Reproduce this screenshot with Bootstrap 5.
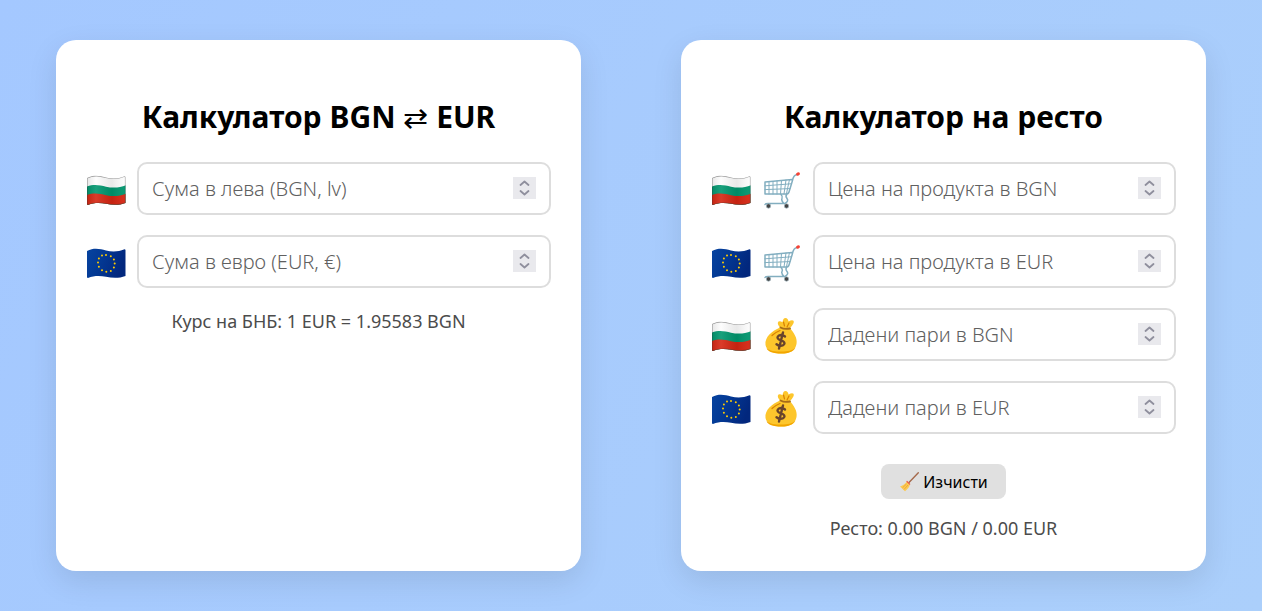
<!DOCTYPE html>
<html lang="bg">
<head>
<meta charset="utf-8">
<meta name="viewport" content="width=device-width, initial-scale=1">
<title>Калкулатор BGN ⇄ EUR</title>
<link href="https://cdn.jsdelivr.net/npm/bootstrap@5.3.0/dist/css/bootstrap.min.css" rel="stylesheet">
<style>
  body { font-family: "Noto Sans", "Open Sans", sans-serif; color: #000; background: linear-gradient(120deg, #a4c8ff, #abcffb); }
  .page-wrap { max-width: 1190px; padding: 40px 20px; }
  .panels { gap: 40px 100px; }
  .panel { background: #fff; border-radius: 20px; padding: 60px 30px 30px; box-shadow: 0 10px 30px rgba(0, 0, 0, .1); flex: 1 1 400px; min-width: 0; }
  .panel h1 { font-size: 30px; line-height: 34px; margin-bottom: 28px; }
  .field-row { gap: 11px; margin-bottom: 20px; }
  .icons { gap: 11px; }
  .icons svg { width: 40px; height: 40px; }
  .amount { height: 53px; border: 2px solid #ddd; border-radius: 10px; padding: 0 48px 0 13px; font-size: 20px; color: #222; appearance: textfield;
    background: #fff url("data:image/svg+xml,%3Csvg xmlns='http://www.w3.org/2000/svg' width='23' height='22'%3E%3Cpath fill='%23e9e9ed' d='M0 0h23v22H0z'/%3E%3Cpath d='M7.5 8l4-3.500 4 3.500M7.500 14l4 3.500 4-3.500' fill='none' stroke='%238f8f9d' stroke-width='1.800' stroke-linecap='round' stroke-linejoin='round'/%3E%3C/svg%3E") no-repeat right 13px top 13px; }
  .amount::-webkit-inner-spin-button { appearance: none; margin: 0; }
  .amount::placeholder { color: #606060; font-weight: 300; }
  .note { font-size: 18px; line-height: 26px; color: #4c4c4c; }
  .clear-btn { background: #e0e0e0; border: 0; border-radius: 8px; height: 35px; margin: 10px 0 16px; padding: 0 18px; font-size: 16px; line-height: 24px; gap: 4px; color: #000; }
  .clear-btn svg { width: 20px; height: 20px; }
</style>
</head>
<body>
<svg class="position-absolute" width="0" height="0" aria-hidden="true">
  <defs>
    <linearGradient id="euBlue" x1="0" x2="1" y1="0" y2=".4"><stop stop-color="#0745a2"/><stop offset=".5" stop-color="#033893"/><stop offset="1" stop-color="#02277d"/></linearGradient>
    <linearGradient id="sheen" x1="0" x2="1"><stop stop-color="#000" stop-opacity=".1"/><stop offset=".25" stop-color="#fff" stop-opacity=".1"/><stop offset=".65" stop-color="#000" stop-opacity=".08"/><stop offset="1" stop-color="#fff" stop-opacity=".05"/></linearGradient>
    <clipPath id="wave"><path d="M1 9C8 5.500 14 7 20 8.500s12 1.500 18.500-1.200q1 0 1 1V34C33 36.500 26 36 20 34.800S8 33.500 2 36q-1 0-1-1z"/></clipPath>
  </defs>
  <symbol id="bg" viewBox="0 0 40 40">
    <g clip-path="url(#wave)">
      <path fill="#fdfdfd" d="M0 0h40v40H0z"/>
      <path fill="#00966e" d="M0 18c8-3.500 14-1.500 20-.3s13 1.500 20-1.400V40H0z"/>
      <path fill="#d62612" d="M0 26.500c8-3.500 14-1.500 20-.3s13 1.500 20-1.400V40H0z"/>
      <path fill="url(#sheen)" d="M0 0h40v40H0z"/>
      <path d="M1 9C8 5.500 14 7 20 8.500s12 1.500 18.500-1.200q1 0 1 1V34C33 36.500 26 36 20 34.800S8 33.500 2 36q-1 0-1-1z" fill="none" stroke="#333" stroke-opacity=".45" stroke-width="1.200"/>
    </g>
  </symbol>
  <symbol id="eu" viewBox="0 0 40 40">
    <g clip-path="url(#wave)"><path fill="url(#euBlue)" d="M0 0h40v40H0z"/></g>
    <g fill="#fc0">
      <circle cx="20" cy="13" r="1"/><circle cx="24.800" cy="14.300" r="1"/><circle cx="27.900" cy="17.600" r="1"/><circle cx="28.700" cy="21.500" r="1"/><circle cx="27.900" cy="25.500" r="1"/><circle cx="24.800" cy="29" r="1"/><circle cx="20.300" cy="29.800" r="1"/><circle cx="16" cy="28.200" r="1"/><circle cx="12.900" cy="24.800" r="1"/><circle cx="12" cy="20.500" r="1"/><circle cx="12.900" cy="16.500" r="1"/><circle cx="16" cy="13.600" r="1"/>
    </g>
  </symbol>
  <symbol id="cart" viewBox="0 -1 40 40">
    <g fill="none" stroke="#82aec0" stroke-linecap="round" stroke-linejoin="round">
      <path stroke-width="1.500" d="M35 4.500c-3 .5-4 3-4.500 6L27 22q-.5 2-3 2L3 24 3 12 30 9.500M19 24.500q2 2 1 4t2 5M25 24q-2 2 0 4.500t-2 5L6 33.500q-2.500 0-3 1"/>
      <path stroke-width="1" d="M3 15.800l26-2M3 19.600l25-1M7 12v12M11 11.500V24M15 11v13M19.500 10.500L18.500 24M24 10l-2 14M27.500 9.500l-3 14"/>
    </g>
    <g fill="#444" stroke="#9fb5bd" stroke-width=".7"><circle cx="6.500" cy="36" r="2.200"/><circle cx="24.500" cy="36" r="2.200"/></g>
    <ellipse cx="36" cy="4" rx="2" ry="1.600" fill="#f44336" transform="rotate(-20 36 4)"/>
  </symbol>
  <symbol id="money" viewBox="0 -1 40 40">
    <path fill="#fdc62c" d="M18 11.500c-2-2.500-3-4.500-1.500-6q2-.5 4 .8Q21 2 23.500 2t3 3.500q3.500-2 5-.8 1.500 2-3.500 7.300c4 5 7.500 10 6.500 16-1.500 7-7 9.500-15 9.500S4.500 35 3.500 29c-1-8 6.500-14 14.500-17.500z"/>
    <path fill="#f2a600" d="M4.500 32c1.500 4 6.500 5.500 15 5.500 7 0 12-2 14-6-3 3-7.500 4-14 4S8 35 4.500 32z"/>
    <path fill="none" stroke="#d98200" stroke-width="1.200" stroke-linecap="round" d="M21.500 6l1 4M27 7l-2 4M18 14.500q-5 2-8 5"/>
    <path fill="none" stroke="#a66c1a" stroke-width="1.800" stroke-linecap="round" d="M18.500 11.500q4 2.200 9.500 1"/>
    <path fill="none" stroke="#68442c" stroke-width="2.400" stroke-linecap="round" d="M23 20.500q-3-2.500-6-1-3 2 0 4l4 1.700q3 2 0 4-3 1.600-6.500-1M21 16.500l-4 16"/>
  </symbol>
  <symbol id="broom" viewBox="0 0 20 20">
    <path stroke="#a56a4c" stroke-width="1.400" stroke-linecap="round" d="M19.300 .8L10 10.500"/>
    <path fill="#fcca52" d="M8 9.500l2.700 2.700c.3 2.500-2 4.500-4.700 7L1 14.500c2.500-.8 5-2.500 7-5z"/>
    <path fill="none" stroke="#e49a2d" stroke-width=".7" d="M7.500 12l-4 3.800M9 13l-4 4.500"/>
    <path stroke="#ed5b45" stroke-width="1.200" stroke-linecap="round" d="M8 9.500l2.700 2.700"/>
  </symbol>
</svg>

<main class="container-fluid page-wrap">
  <div class="panels d-flex flex-wrap align-items-stretch">
    <section class="panel text-center">
      <h1 class="fw-bold">Калкулатор BGN <span class="fw-normal">⇄</span> EUR</h1>
      <div class="field-row d-flex align-items-center">
        <label class="icons d-flex" for="bgn" aria-label="Сума в лева"><svg><use href="#bg"/></svg></label>
        <input class="amount form-control" id="bgn" type="number" placeholder="Сума в лева (BGN, lv)">
      </div>
      <div class="field-row d-flex align-items-center">
        <label class="icons d-flex" for="eur" aria-label="Сума в евро"><svg><use href="#eu"/></svg></label>
        <input class="amount form-control" id="eur" type="number" placeholder="Сума в евро (EUR, €)">
      </div>
      <p class="note mb-0">Курс на БНБ: 1 EUR = 1.95583 BGN</p>
    </section>

    <section class="panel text-center">
      <h1 class="fw-bold">Калкулатор на ресто</h1>
      <div class="field-row d-flex align-items-center">
        <label class="icons d-flex" for="priceBgn" aria-label="Цена в BGN"><svg><use href="#bg"/></svg><svg><use href="#cart"/></svg></label>
        <input class="amount form-control" id="priceBgn" type="number" placeholder="Цена на продукта в BGN">
      </div>
      <div class="field-row d-flex align-items-center">
        <label class="icons d-flex" for="priceEur" aria-label="Цена в EUR"><svg><use href="#eu"/></svg><svg><use href="#cart"/></svg></label>
        <input class="amount form-control" id="priceEur" type="number" placeholder="Цена на продукта в EUR">
      </div>
      <div class="field-row d-flex align-items-center">
        <label class="icons d-flex" for="paidBgn" aria-label="Дадени в BGN"><svg><use href="#bg"/></svg><svg><use href="#money"/></svg></label>
        <input class="amount form-control" id="paidBgn" type="number" placeholder="Дадени пари в BGN">
      </div>
      <div class="field-row d-flex align-items-center">
        <label class="icons d-flex" for="paidEur" aria-label="Дадени в EUR"><svg><use href="#eu"/></svg><svg><use href="#money"/></svg></label>
        <input class="amount form-control" id="paidEur" type="number" placeholder="Дадени пари в EUR">
      </div>
      <button class="clear-btn d-inline-flex align-items-center" type="button"><svg aria-hidden="true"><use href="#broom"/></svg>Изчисти</button>
      <p class="note mb-0">Ресто: 0.00 BGN / 0.00 EUR</p>
    </section>
  </div>
</main>
<script src="https://cdn.jsdelivr.net/npm/bootstrap@5.3.0/dist/js/bootstrap.bundle.min.js"></script>
</body>
</html>
